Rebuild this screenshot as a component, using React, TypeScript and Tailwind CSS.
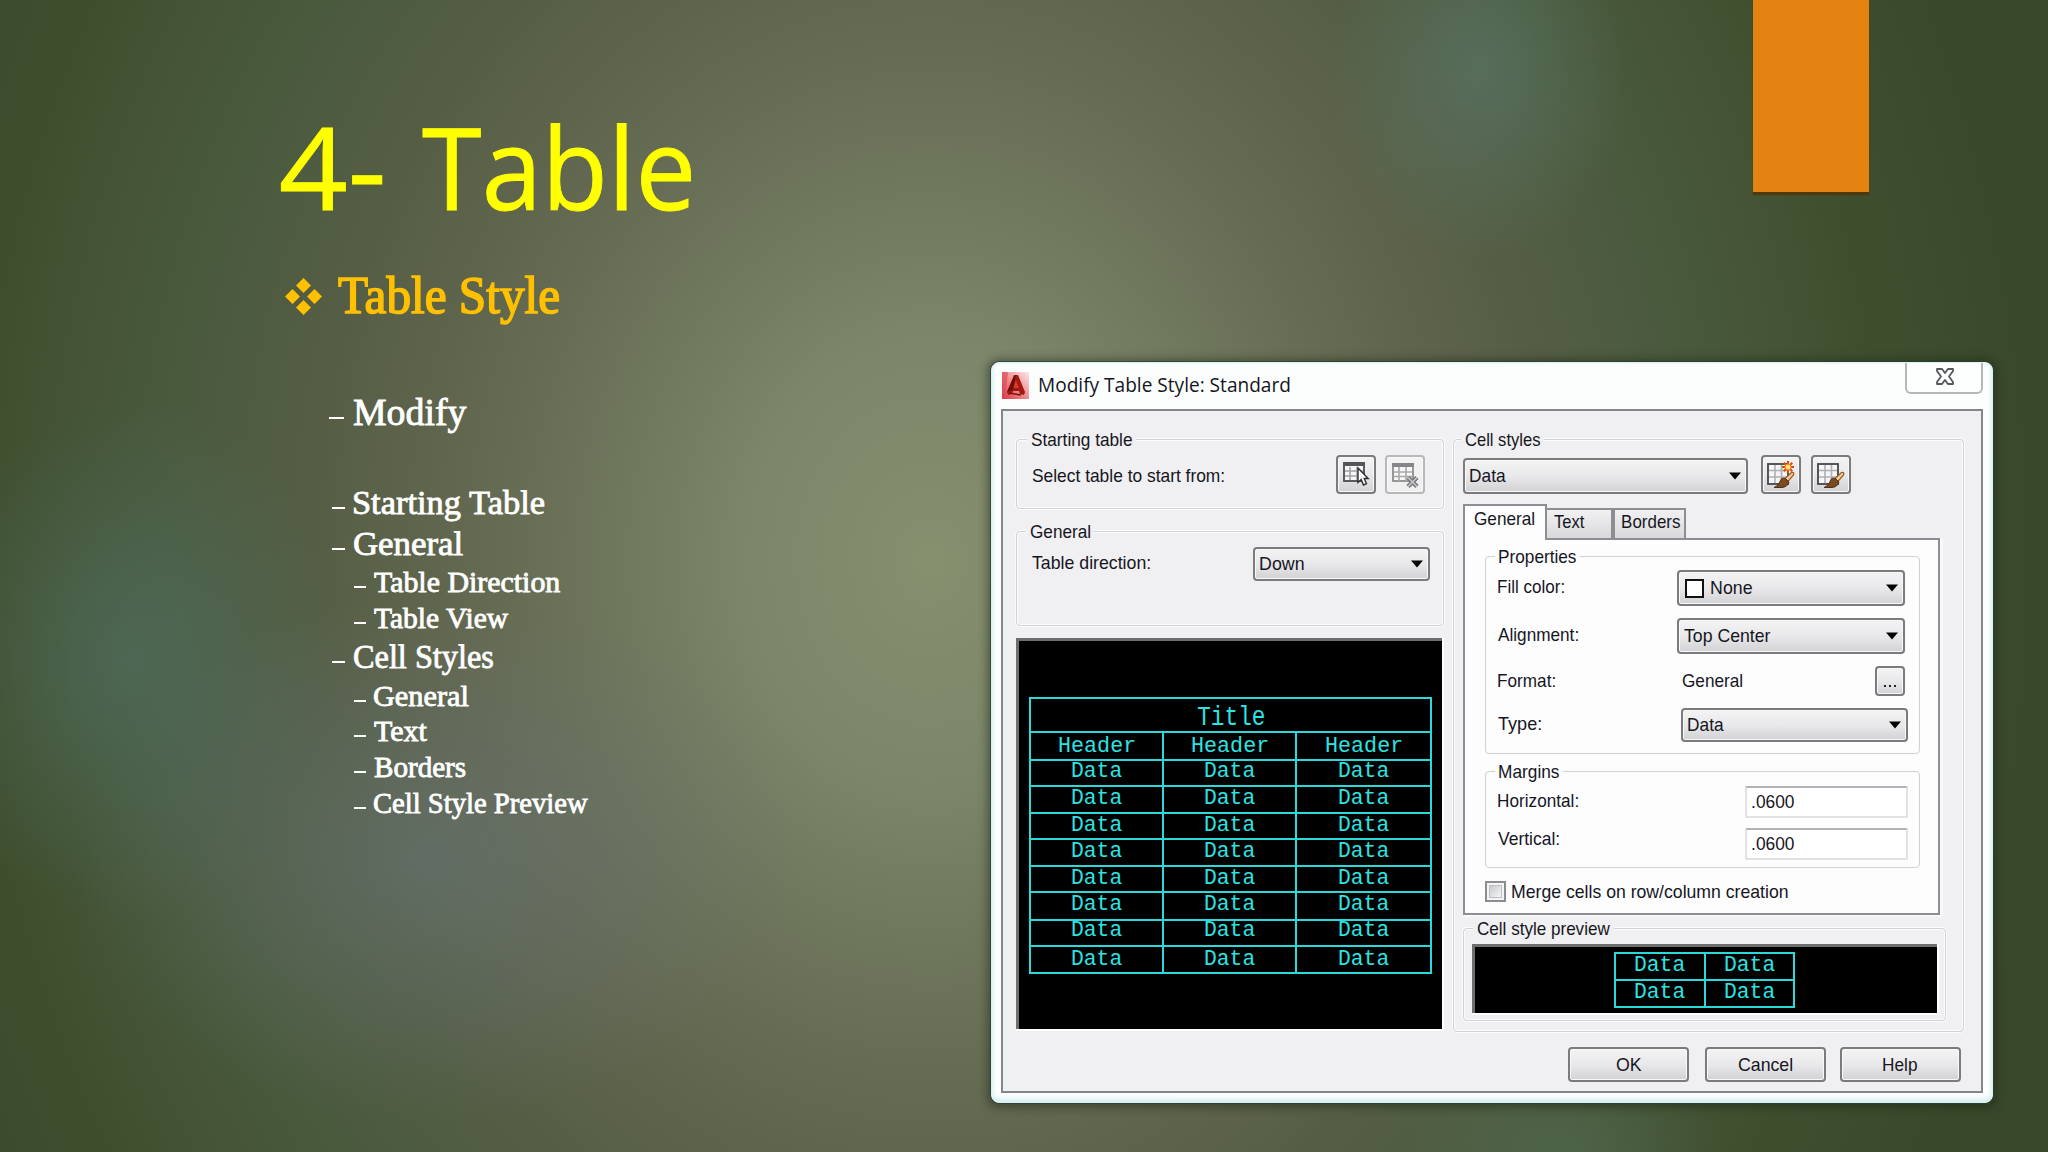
import React, { useLayoutEffect, useRef } from "react";

/* A line of text whose box runs from cap height to baseline and whose ink is fitted to a width. */
function Fit({ w, cap = 14, className = "", children }: { w: number; cap?: number; className?: string; children: string }) {
  const ref = useRef<HTMLSpanElement>(null);
  useLayoutEffect(() => {
    const el = ref.current;
    if (!el) return;
    const cs = getComputedStyle(el);
    const ctx = document.createElement("canvas").getContext("2d");
    if (!ctx) return;
    ctx.font = `${cs.fontWeight} ${cs.fontSize} ${cs.fontFamily}`;
    const m = ctx.measureText(children);
    const ink = m.actualBoundingBoxLeft + m.actualBoundingBoxRight;
    const s = w / ink;
    el.style.transform = `translateX(${m.actualBoundingBoxLeft * s}px) scaleX(${s})`;
  }, [children, w]);
  return (
    <span className="flex shrink-0 items-baseline leading-[0] whitespace-nowrap" style={{ width: w }}>
      <span className="w-0 shrink-0" style={{ height: cap }} />
      <span ref={ref} className={`origin-left ${className}`}>{children}</span>
    </span>
  );
}

function Ui({ w, children }: { w: number; children: string }) {
  return (
    <span className="block pb-px">
      <Fit w={w} cap={13} className="text-[19px] text-[#16161e]">{children}</Fit>
    </span>
  );
}

function Legend({ w, className, bg, children }: { w: number; className: string; bg: string; children: string }) {
  return (
    <div className={`w-max px-1 ${bg} ${className}`}>
      <Ui w={w}>{children}</Ui>
    </div>
  );
}

const group = "rounded-[4px] border border-[#cfd2d6] shadow-[0_0_0_1px_#fbfbfc,inset_0_0_0_1px_#fbfbfc]";
const face = "border-2 border-[#7b7b7e] bg-linear-to-b from-[#f4f3f4] from-0% via-[#e9e8ea] via-50% to-[#d2d1d4] to-100% shadow-[inset_0_0_0_1px_#f8f8f8]";

function Combo({ className, w, swatch, children }: { className: string; w: number; swatch?: boolean; children: string }) {
  return (
    <div className={`flex shrink-0 items-center rounded-[4px] pr-[5px] pl-[5px] ${face} ${className}`}>
      {swatch && <span className="mr-[7px] ml-[1px] size-[19px] border-2 border-[#111] bg-white" />}
      <Ui w={w}>{children}</Ui>
      <svg className="ml-auto" width="12" height="8" viewBox="0 0 12 8"><path d="M0 .5h12L6 7.5z" fill="#050505" /></svg>
    </div>
  );
}

function Btn({ className, w, children }: { className: string; w: number; children: string }) {
  return (
    <div className={`flex h-[35px] items-center justify-center rounded-[4px] ${face} ${className}`}>
      <Ui w={w}>{children}</Ui>
    </div>
  );
}

function PickIcon() {
  return (
    <svg width="28" height="28" viewBox="0 0 28 28">
      <rect x="2" y="2" width="20" height="18" fill="#f6f6f6" stroke="#4b4b50" strokeWidth="1.800" />
      <path d="M1 3h22" stroke="#55555a" strokeWidth="4" />
      <path d="M3 10h18M3 15h18M8 6v13M15 6v13" stroke="#a3a3a8" strokeWidth="1.600" />
      <path d="M16 7v14.500l3.200-3 2.300 5.500 3-1.300-2.300-5.200h4z" fill="#fff" stroke="#2c2c30" strokeWidth="1.400" />
    </svg>
  );
}

function RemoveIcon() {
  return (
    <svg width="28" height="28" viewBox="0 0 28 28">
      <rect x="2" y="3" width="20" height="17" fill="#f6f6f6" stroke="#8d8d90" strokeWidth="1.800" />
      <path d="M1 4h22" stroke="#85858a" strokeWidth="4" />
      <path d="M3 11h18M3 15.500h18M8 6v14M15 6v14" stroke="#a9a9ac" strokeWidth="1.600" />
      <path d="M17 16.500l9 9M26 16.500l-9 9" stroke="#77777a" strokeWidth="4.500" />
      <path d="M17 16.500l9 9M26 16.500l-9 9" stroke="#c9c9cb" strokeWidth="1.500" />
    </svg>
  );
}

function StyleIcon({ star }: { star?: boolean }) {
  return (
    <svg width="30" height="30" viewBox="0 0 30 30">
      <rect x="2" y="4" width="20" height="20" fill="#f5f5f6" stroke="#43454c" strokeWidth="1.800" />
      <path d="M3 10.500h18M3 17h18M9 5v18M15.500 5v18" stroke="#aeb0b6" strokeWidth="1.600" />
      <path d="M18 19.500l7.500-7q3-1 2 2.500L21.500 22z" fill="#f3cf9c" stroke="#9c5b22" strokeWidth="1.300" />
      <path d="M8 27.500q5-1.500 6-6t5.500-3l3.500 3.500q-1.500 5-7 5.500z" fill="#7b4a20" stroke="#54300f" strokeWidth="1" />
      {star && (
        <g>
          <path d="M22 1v12M16 7h12M17.700 2.700l8.600 8.600M26.300 2.700l-8.600 8.600" stroke="#e2480e" strokeWidth="2" />
          <circle cx="22" cy="7" r="3" fill="#ffe46b" stroke="#ef7d15" strokeWidth="1" />
        </g>
      )}
    </svg>
  );
}

function IconBtn({ className = "", children }: { className?: string; children: React.ReactNode }) {
  return <div className={`mt-[8px] flex h-[39px] w-[40px] shrink-0 items-center justify-center rounded-[4px] ${face} ${className}`}>{children}</div>;
}

const cad = 'font-["Liberation_Mono"] text-[#2ce3e3]';

const dataRows = [
  ["h-[26px]", "pt-[2px]"],
  ["h-[27px]", "pt-[3px]"],
  ["h-[26px]", "pt-[3px]"],
  ["h-[27px]", "pt-[3px]"],
  ["h-[26px]", "pt-[3px]"],
  ["h-[28px]", "pt-[3px]"],
  ["h-[26px]", "pt-[1px]"],
  ["h-[27px]", "pt-[4px]"],
];

function PreviewTable() {
  return (
    <div className="mt-[56px] ml-[10px] w-[403px] border-2 border-[#2ad9d9]">
      <div className="flex h-[32px] justify-center pt-[6px]">
        <Fit w={66} cap={20} className={`${cad} text-[28px]`}>Title</Fit>
      </div>
      <div className="grid h-[28px] grid-cols-3 divide-x-2 divide-[#2ad9d9] border-t-2 border-[#2ad9d9]">
        {[0, 1, 2].map((c) => (
          <div key={c} className="flex justify-center pt-[5px]">
            <Fit w={76} className={`${cad} text-[22px]`}>Header</Fit>
          </div>
        ))}
      </div>
      {dataRows.map(([h, pt], i) => (
        <div key={i} className={`grid grid-cols-3 divide-x-2 divide-[#2ad9d9] border-t-2 border-[#2ad9d9] ${h}`}>
          {[0, 1, 2].map((c) => (
            <div key={c} className={`flex justify-center ${pt}`}>
              <Fit w={50} className={`${cad} text-[22px]`}>Data</Fit>
            </div>
          ))}
        </div>
      ))}
    </div>
  );
}

function Dialog() {
  const bg = "bg-[#f0eff1]";
  return (
    <div className='mt-[170px] flex h-[741px] w-[1002px] flex-col rounded-[8px] border border-[#d9f1f2] bg-[#fcfefe] font-["Liberation_Sans"] shadow-[0_0_0_1px_rgba(50,62,48,0.75),0_1px_8px_4px_rgba(25,35,20,0.45),inset_0_-2px_4px_1px_#d3eef3]'>
      <div className="flex h-[46px] shrink-0">
        <svg className="mt-[9px] ml-[10px]" width="27" height="27" viewBox="0 0 27 27">
          <defs>
            <linearGradient id="lg" x1="0" y1="1" x2="1" y2="0">
              <stop offset="0" stopColor="#e0343f" />
              <stop offset="0.5" stopColor="#ee8e92" />
              <stop offset="1" stopColor="#fbe9ea" />
            </linearGradient>
          </defs>
          <rect width="27" height="27" fill="url(#lg)" />
          <path d="M0 0h6L3 27H0z" fill="#dd4650" opacity=".6" />
          <path d="M5 20L12 3h4l7 17-1 3-4-1-1-3h-6l-1 3-4 1z" fill="#a31a12" />
          <path d="M14 8l3 8h-6z" fill="#d9382a" />
          <path d="M5 20l6-2 3-15-2 1z" fill="#6f0f0b" />
          <path d="M7 21l12 2" stroke="#7d120d" strokeWidth="1.500" />
        </svg>
        <div className="mt-[15px] ml-[10px]">
          <Fit w={251} className='font-["Open_Sans"] text-[19.5px] text-[#15151c]'>Modify Table Style: Standard</Fit>
        </div>
        <div className="mr-[9px] ml-auto flex h-[31px] w-[78px] justify-center rounded-b-[6px] border-2 border-t-0 border-[#b3b7ba] bg-[#fdfefe] pt-[5px] pl-[2px]">
          <svg width="20" height="17" viewBox="0 0 20 17">
            <path d="M2 1h5l3 4 3-4h5v2l-4 5.500 4 5.500v2h-5l-3-4-3 4H2v-2l4-5.500L2 3z" fill="#fff" stroke="#52585e" strokeWidth="1.800" strokeLinejoin="round" />
          </svg>
        </div>
      </div>
      <div className={`ml-[9px] h-[684px] w-[982px] border-2 border-t-2 border-[#838588] ${bg}`}>
        <div className="flex">
          <div className="ml-[13px] w-[428px] pt-[28px]">
            <div className={`h-[70px] ${group}`}>
              <Legend w={101} bg={bg} className="mt-[-7px] ml-[10px]">Starting table</Legend>
              <div className="flex">
                <div className="mt-[22px] ml-[15px]"><Ui w={192}>Select table to start from:</Ui></div>
                <IconBtn className="ml-auto"><PickIcon /></IconBtn>
                <IconBtn className="mr-[18px] ml-[9px] border-[#b8b8bb]! from-[#f3f3f4]! via-[#f1f1f2]! to-[#efeff0]!"><RemoveIcon /></IconBtn>
              </div>
            </div>
            <div className={`mt-[22px] h-[95px] ${group}`}>
              <Legend w={60} bg={bg} className="mt-[-7px] ml-[9px]">General</Legend>
              <div className="flex">
                <div className="mt-[17px] ml-[15px]"><Ui w={118}>Table direction:</Ui></div>
                <Combo className="mt-[8px] mr-[13px] ml-auto h-[34px] w-[177px]" w={44}>Down</Combo>
              </div>
            </div>
            <div className="mt-[12px] h-[391px] w-[426px] overflow-hidden border-t-[3px] border-l-[3px] border-[#6e6e6e] bg-black pr-[10px] shadow-[1px_1px_0_1px_#fff]">
              <PreviewTable />
            </div>
          </div>
          <div className={`mt-[28px] ml-[9px] h-[593px] w-[511px] ${group}`}>
            <Legend w={75} bg={bg} className="mt-[-7px] ml-[7px]">Cell styles</Legend>
            <div className="ml-[9px] flex">
              <Combo className="mt-[11px] h-[36px] w-[285px]" w={36}>Data</Combo>
              <IconBtn className="ml-[13px]"><StyleIcon star /></IconBtn>
              <IconBtn className="ml-[10px]"><StyleIcon /></IconBtn>
            </div>
            <div className="mt-[10px] ml-[9px] flex h-[34px]">
              <div className="relative h-[36px] w-[84px] border-2 border-b-0 border-[#8d8e93] bg-[#fdfdfe] pt-[6px] pl-[9px]">
                <Ui w={60}>General</Ui>
              </div>
              <div className="mt-[4px] h-[30px] w-[66px] border-t-2 border-r-2 border-[#8d8e93] bg-linear-to-b from-[#f1f1f2] to-[#d9d8db] pt-[5px] pl-[7px]">
                <Ui w={31}>Text</Ui>
              </div>
              <div className="mt-[4px] h-[30px] w-[73px] border-2 border-b-0 border-[#8d8e93] bg-linear-to-b from-[#f1f1f2] to-[#d9d8db] pt-[5px] pl-[7px]">
                <Ui w={58}>Borders</Ui>
              </div>
            </div>
            <div className="ml-[9px] flex h-[377px] w-[477px] flex-col border-2 border-[#8d8e93] bg-[#fdfdfe] shadow-[2px_1px_0_1px_#f8f8f9]">
              <div className={`mt-[16px] ml-[20px] h-[198px] w-[435px] ${group}`}>
                <Legend w={77} bg="bg-[#fdfdfe]" className="mt-[-7px] ml-[9px]">Properties</Legend>
                <div className="ml-[12px] flex">
                  <div className="mt-[16px]"><Ui w={66}>Fill color:</Ui></div>
                  <Combo className="mt-[6px] mr-[14px] ml-auto h-[36px] w-[228px]" w={41} swatch>None</Combo>
                </div>
                <div className="ml-[12px] flex">
                  <div className="mt-[22px]"><Ui w={80}>Alignment:</Ui></div>
                  <Combo className="mt-[12px] mr-[14px] ml-auto h-[36px] w-[228px]" w={87}>Top Center</Combo>
                </div>
                <div className="ml-[12px] flex">
                  <div className="mt-[20px] w-[184px]"><Ui w={57}>Format:</Ui></div>
                  <div className="mt-[20px]"><Ui w={60}>General</Ui></div>
                  <div className={`mt-[12px] mr-[14px] ml-auto flex h-[30px] w-[30px] items-center justify-center gap-[3px] rounded-[4px] pt-[10px] ${face}`}>
                    <i className="size-[2px] bg-[#222]" />
                    <i className="size-[2px] bg-[#222]" />
                    <i className="size-[2px] bg-[#222]" />
                  </div>
                </div>
                <div className="ml-[12px] flex">
                  <div className="mt-[21px]"><Ui w={43}>Type:</Ui></div>
                  <Combo className="mt-[12px] mr-[11px] ml-auto h-[34px] w-[227px]" w={36}>Data</Combo>
                </div>
              </div>
              <div className={`mt-[17px] ml-[20px] h-[97px] w-[435px] ${group}`}>
                <Legend w={60} bg="bg-[#fdfdfe]" className="mt-[-7px] ml-[9px]">Margins</Legend>
                <div className="ml-[12px] flex">
                  <div className="mt-[15px]"><Ui w={80}>Horizontal:</Ui></div>
                  <div className="mt-[7px] mr-[11px] ml-auto h-[32px] w-[163px] rounded-[2px] border-2 border-[#e0e2e6] border-t-[#b1b3b9] bg-white pt-[7px] pl-[5px]"><Ui w={42}>.0600</Ui></div>
                </div>
                <div className="ml-[12px] flex">
                  <div className="mt-[14px]"><Ui w={61}>Vertical:</Ui></div>
                  <div className="mt-[10px] mr-[11px] ml-auto h-[32px] w-[163px] rounded-[2px] border-2 border-[#e0e2e6] border-t-[#b1b3b9] bg-white pt-[7px] pl-[5px]"><Ui w={42}>.0600</Ui></div>
                </div>
              </div>
              <div className="mt-[13px] ml-[20px] flex">
                <div className="mr-[6px] size-[21px] border-2 border-[#8b8c90] bg-[#f4f4f4] p-[2px]">
                  <div className="size-full border border-[#bdbfc3] bg-linear-to-br from-[#c8cacf] to-[#f6f6f7]" />
                </div>
                <div className="mt-[4px]"><Ui w={276}>Merge cells on row/column creation</Ui></div>
              </div>
            </div>
            <div className={`mt-[13px] ml-[9px] h-[93px] w-[483px] ${group}`}>
              <Legend w={133} bg={bg} className="mt-[-7px] ml-[9px]">Cell style preview</Legend>
              <div className="mt-[8px] ml-[8px] flex h-[69px] w-[465px] justify-center border-t-[3px] border-l-[3px] border-[#6e6e6e] bg-black pt-[5px] pr-[3px] shadow-[1px_1px_0_1px_#fff]">
                <div className="grid h-[56px] w-[181px] grid-cols-2 grid-rows-2 gap-[2px] border-2 border-[#2ad9d9] bg-[#2ad9d9]">
                  {[0, 1, 2, 3].map((c) => (
                    <div key={c} className="flex justify-center bg-black pt-[3px] pl-[1px]">
                      <Fit w={50} className={`${cad} text-[22px]`}>Data</Fit>
                    </div>
                  ))}
                </div>
              </div>
            </div>
          </div>
        </div>
        <div className="mt-[15px] mr-[20px] flex justify-end">
          <Btn className="w-[121px]" w={26}>OK</Btn>
          <Btn className="ml-[16px] w-[121px] pr-[2px]" w={54}>Cancel</Btn>
          <Btn className="ml-[14px] w-[121px] pr-[1px]" w={34}>Help</Btn>
        </div>
      </div>
    </div>
  );
}

type Item = { gap: string; pad: string; dash: string; w: number; size: string; text: string };
const L1 = { pad: "pl-[332px]", dash: "w-[13px] mr-[9px] mb-[5px]", size: "text-[33px]" };
const L2 = { pad: "pl-[354px]", dash: "w-[12px] mr-[8px] mb-[4px]", size: "text-[28.5px]" };
const items: Item[] = [
  { gap: "h-[112px]", pad: "pl-[329px]", dash: "w-[15px] mr-[10px] mb-[6px]", size: "text-[37px]", w: 113, text: "Modify" },
  { gap: "h-[89px]", ...L1, w: 191, text: "Starting Table" },
  { gap: "h-[41px]", ...L1, w: 109, text: "General" },
  { gap: "h-[37px]", ...L2, w: 186, text: "Table Direction" },
  { gap: "h-[36px]", ...L2, w: 135, text: "Table View" },
  { gap: "h-[40px]", ...L1, w: 139, text: "Cell Styles" },
  { gap: "h-[38px]", ...L2, w: 95, text: "General" },
  { gap: "h-[35px]", ...L2, w: 53, text: "Text" },
  { gap: "h-[36px]", ...L2, w: 92, text: "Borders" },
  { gap: "h-[36px]", ...L2, w: 214, text: "Cell Style Preview" },
];

export default function App() {
  return (
    <div className="flex h-[1152px] w-[2048px] overflow-hidden bg-[#3b4a2c] bg-[radial-gradient(ellipse_150px_190px_at_1480px_70px,rgba(92,122,108,0.6),transparent),radial-gradient(ellipse_210px_260px_at_130px_660px,rgba(82,116,106,0.55),transparent),radial-gradient(ellipse_360px_260px_at_430px_860px,rgba(104,118,122,0.55),transparent),radial-gradient(ellipse_160px_100px_at_1560px_1150px,rgba(84,112,88,0.5),transparent),radial-gradient(ellipse_950px_1150px_at_930px_560px,#868f6e_0%,#7b8569_20%,#6d755b_35%,#62674f_50%,#555e45_65%,#4a5a3d_80%,#3f4f2e_100%,#39472a_120%)]">
      <div className="w-[991px] shrink-0">
        <div className="flex pt-[130px] pl-[281px]">
          <Fit w={101} cap={80} className='font-["Open_Sans"] text-[113px] text-[#ffff00] [-webkit-text-stroke:0.8px_#ffff00]'>4-</Fit>
          <div className="ml-[41px]">
            <Fit w={268} cap={80} className='font-["Open_Sans"] text-[113px] text-[#ffff00] [-webkit-text-stroke:0.8px_#ffff00]'>Table</Fit>
          </div>
        </div>
        <div className="flex pt-[68px] pl-[285px]">
          <svg width="37" height="37" viewBox="0 0 37 37" fill="#ffc000">
            <path d="M18.500 0l7.500 7.500-7.500 7.500L11 7.500zM18.500 22l7.500 7.500-7.500 7.500-7.500-7.500zM7.500 11l7.500 7.500L7.500 26 0 18.500zM29.500 11l7.500 7.500-7.500 7.500-7.500-7.500z" />
          </svg>
          <div className="mt-[1px] ml-[16px]">
            <Fit w={221} cap={34} className='font-["Liberation_Serif"] text-[52px] text-[#ffc000] [-webkit-text-stroke:1.6px_#ffc000]'>Table Style</Fit>
          </div>
        </div>
        <div className="-mt-[2px]">
          {items.map((it, i) => (
            <div key={i} className={`flex items-end ${it.gap} ${it.pad}`}>
              <span className={`h-[2.500px] shrink-0 bg-white ${it.dash}`} />
              <Fit w={it.w} cap={18} className={`font-["Liberation_Serif"] text-white [-webkit-text-stroke:0.8px_white] ${it.size}`}>{it.text}</Fit>
            </div>
          ))}
        </div>
      </div>
      <div className="shrink-0">
        <div className="ml-[762px] h-[192px] w-[116px] bg-[#e48312] shadow-[0_3px_1px_#4e390c]" />
        <Dialog />
      </div>
    </div>
  );
}
